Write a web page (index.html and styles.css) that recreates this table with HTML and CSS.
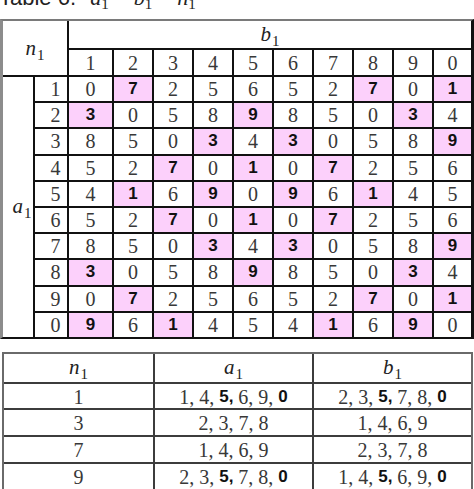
FILE: index.html
```html
<!DOCTYPE html>
<html>
<head>
<meta charset="utf-8">
<link rel="stylesheet" href="styles.css">
</head>
<body>
<div class="title">Table 6. <span class="m"><i>a</i><sub>1</sub></span><span class="sep">–</span><span class="m"><i>b</i><sub>1</sub></span><span class="sep">–</span><span class="m"><i>n</i><sub>1</sub></span></div>

<div class="grid">
  <div class="c corner"><span class="var"><i>n</i><sub>1</sub></span></div>
  <div class="c bhead"><span class="var"><i>b</i><sub>1</sub></span></div>
  <div class="c">1</div><div class="c">2</div><div class="c">3</div><div class="c">4</div><div class="c">5</div><div class="c">6</div><div class="c">7</div><div class="c">8</div><div class="c">9</div><div class="c">0</div>
  <div class="c ahead"><span class="var"><i>a</i><sub>1</sub></span></div>

  <div class="c lbl">1</div><div class="c">0</div><div class="c hl">7</div><div class="c">2</div><div class="c">5</div><div class="c">6</div><div class="c">5</div><div class="c">2</div><div class="c hl">7</div><div class="c">0</div><div class="c hl">1</div>
  <div class="c lbl">2</div><div class="c hl">3</div><div class="c">0</div><div class="c">5</div><div class="c">8</div><div class="c hl">9</div><div class="c">8</div><div class="c">5</div><div class="c">0</div><div class="c hl">3</div><div class="c">4</div>
  <div class="c lbl">3</div><div class="c">8</div><div class="c">5</div><div class="c">0</div><div class="c hl">3</div><div class="c">4</div><div class="c hl">3</div><div class="c">0</div><div class="c">5</div><div class="c">8</div><div class="c hl">9</div>
  <div class="c lbl">4</div><div class="c">5</div><div class="c">2</div><div class="c hl">7</div><div class="c">0</div><div class="c hl">1</div><div class="c">0</div><div class="c hl">7</div><div class="c">2</div><div class="c">5</div><div class="c">6</div>
  <div class="c lbl">5</div><div class="c">4</div><div class="c hl">1</div><div class="c">6</div><div class="c hl">9</div><div class="c">0</div><div class="c hl">9</div><div class="c">6</div><div class="c hl">1</div><div class="c">4</div><div class="c">5</div>
  <div class="c lbl">6</div><div class="c">5</div><div class="c">2</div><div class="c hl">7</div><div class="c">0</div><div class="c hl">1</div><div class="c">0</div><div class="c hl">7</div><div class="c">2</div><div class="c">5</div><div class="c">6</div>
  <div class="c lbl">7</div><div class="c">8</div><div class="c">5</div><div class="c">0</div><div class="c hl">3</div><div class="c">4</div><div class="c hl">3</div><div class="c">0</div><div class="c">5</div><div class="c">8</div><div class="c hl">9</div>
  <div class="c lbl">8</div><div class="c hl">3</div><div class="c">0</div><div class="c">5</div><div class="c">8</div><div class="c hl">9</div><div class="c">8</div><div class="c">5</div><div class="c">0</div><div class="c hl">3</div><div class="c">4</div>
  <div class="c lbl">9</div><div class="c">0</div><div class="c hl">7</div><div class="c">2</div><div class="c">5</div><div class="c">6</div><div class="c">5</div><div class="c">2</div><div class="c hl">7</div><div class="c">0</div><div class="c hl">1</div>
  <div class="c lbl">0</div><div class="c hl">9</div><div class="c">6</div><div class="c hl">1</div><div class="c">4</div><div class="c">5</div><div class="c">4</div><div class="c hl">1</div><div class="c">6</div><div class="c hl">9</div><div class="c">0</div>
</div>

<div class="grid2">
  <div class="d hd"><span class="var"><i>n</i><sub>1</sub></span></div>
  <div class="d hd"><span class="var"><i>a</i><sub>1</sub></span></div>
  <div class="d hd"><span class="var"><i>b</i><sub>1</sub></span></div>

  <div class="d">1</div>
  <div class="d">1, 4, <b>5,</b> 6, 9, <b>0</b></div>
  <div class="d">2, 3, <b>5,</b> 7, 8, <b>0</b></div>

  <div class="d">3</div>
  <div class="d">2, 3, 7, 8</div>
  <div class="d">1, 4, 6, 9</div>

  <div class="d">7</div>
  <div class="d">1, 4, 6, 9</div>
  <div class="d">2, 3, 7, 8</div>

  <div class="d">9</div>
  <div class="d">2, 3, <b>5,</b> 7, 8, <b>0</b></div>
  <div class="d">1, 4, <b>5,</b> 6, 9, <b>0</b></div>
</div>
</body>
</html>
```

FILE: styles.css
```css
html, body {
  margin: 0;
  padding: 0;
  background: #fff;
}
body {
  width: 474px;
  height: 489px;
  overflow: hidden;
  font-family: "Liberation Serif", serif;
  color: #333;
}

.title {
  font: 22px/22px "Liberation Sans", Arial, sans-serif;
  color: #222;
  height: 22px;
  margin: -13px 0 0 -1px;
  white-space: nowrap;
}
.title .m {
  font-family: "Liberation Serif", serif;
  font-size: 22px;
  margin-left: 6px;
}
.title .m:first-child,
.title > .m:nth-of-type(1) {
  margin-left: 8px;
}
.title .sep {
  margin-left: 8px;
  font-family: "Liberation Serif", serif;
}
.title sub {
  font-size: 15px;
  vertical-align: -4px;
  line-height: 0;
}

.var {
  font-family: "Liberation Serif", serif;
  font-size: 21px;
  color: #222;
}
.var i {
  font-style: italic;
}
.var sub {
  font-size: 15px;
  vertical-align: -5px;
  line-height: 0;
  margin-left: 1px;
}

.grid {
  display: grid;
  grid-template-columns: 30px 32px 43px repeat(8, 38px) 37px;
  grid-template-rows: 27px 25px repeat(10, 24.2px);
  gap: 2px;
  background: #111;
  border-top: 2px solid #7a7a7a;
  border-left: 3px solid #8c8c8c;
  border-right: 3px solid #111;
  border-bottom: 2px solid #111;
  margin-top: 10px;
  width: max-content;
}
.c {
  background: #fff;
  display: flex;
  align-items: center;
  justify-content: center;
  font-size: 20px;
  color: #383838;
  line-height: 1;
}
.c.hl {
  background: #fcd0fb;
  font: bold 17px "Liberation Sans", Arial, sans-serif;
  color: #111;
}
.c.lbl {
  padding-left: 9px;
}
.corner {
  grid-column: 1 / 3;
  grid-row: 1 / 3;
}
.bhead {
  grid-column: 3 / 13;
  grid-row: 1;
}
.ahead {
  grid-column: 1;
  grid-row: 3 / 13;
  padding-left: 8px;
}

.grid2 {
  display: grid;
  grid-template-columns: 149px 157px 157px;
  grid-template-rows: 28px 24px 25px 25px 25px;
  gap: 2px;
  background: #3c3c3c;
  border: 2px solid #6a6a6a;
  margin: 13px 0 0 2px;
  width: max-content;
}
.d {
  background: #fff;
  display: flex;
  align-items: center;
  justify-content: center;
  font-size: 20px;
  color: #383838;
  white-space: pre;
  line-height: 1;
  padding-top: 2px;
}
.d b {
  font: bold 17px "Liberation Sans", Arial, sans-serif;
  color: #111;
}
.d.hd {
  padding-top: 0;
}
```
